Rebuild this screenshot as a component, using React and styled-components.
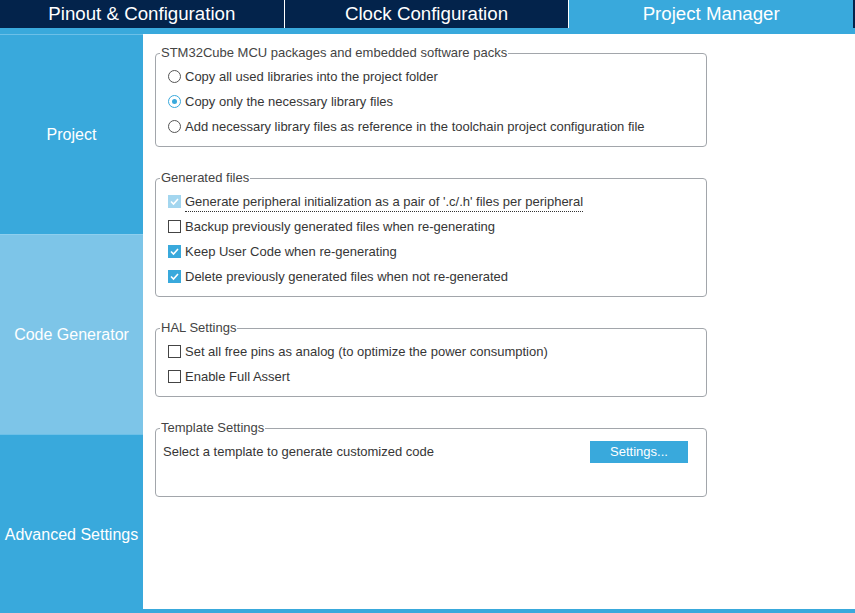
import React from 'react'
import styled, {createGlobalStyle} from 'styled-components'

const GlobalStyle = createGlobalStyle`
  html, body {
    margin: 0;
    padding: 0;
    overflow: hidden;
  }
  body {
    font-family: "Liberation Sans", Arial, sans-serif;
  }
`;

const BLUE = '#39a9dc';
const NAVY = '#03234b';

const Page = styled.div`
  width: 855px;
  height: 613px;
  background: ${BLUE};
  display: flex;
  flex-direction: column;
`;

const TabBar = styled.div`
  height: 28px;
  display: flex;
  background: ${NAVY};
  padding-right: 2px;
  margin-bottom: 6px;
`;

const Tab = styled.div`
  flex: 1;
  display: flex;
  align-items: center;
  justify-content: center;
  color: #fff;
  font-size: 18.7px;
  background: ${p => (p.$active ? BLUE : NAVY)};
  & + & {
    border-left: 1px solid #fff;
  }
`;

const Body = styled.div`
  flex: 1;
  display: flex;
  margin-bottom: 4px;
  min-height: 0;
`;

const Sidebar = styled.div`
  width: 143px;
  display: flex;
  flex-direction: column;
  overflow: hidden;
`;

const NavItem = styled.div`
  flex: 0 0 200px;
  box-sizing: border-box;
  display: flex;
  align-items: center;
  justify-content: center;
  border-top: 1px solid ${p => (p.$active ? '#8ecfee' : '#6cc0e8')};
  background: ${p => (p.$active ? '#7dc5e8' : BLUE)};
  color: #fff;
  font-size: 16px;
`;

const Content = styled.div`
  flex: 1;
  background: #fff;
  padding: 12px 0 0 12px;
`;

const Group = styled.fieldset`
  width: 552px;
  box-sizing: border-box;
  margin: 0 0 24px;
  padding: 4px 0 ${p => p.$pb || 7}px;
  border: 1px solid #a2a6ab;
  border-radius: 4px;
`;

const Legend = styled.legend`
  font-size: 13px;
  line-height: 14px;
  color: #444;
  padding: 0 1px;
  margin-left: 4px;
`;

const Row = styled.div`
  height: 25px;
  display: flex;
  align-items: center;
  gap: 4px;
  padding-left: 12px;
  font-size: 13px;
  color: #363636;
`;

const Label = styled.span`
  line-height: 15px;
  padding-bottom: 2px;
  margin-top: 3px;
  border-bottom: 1px ${p => (p.$focus ? 'dotted #333' : 'solid transparent')};
`;

const RadioBox = styled.span`
  width: 13px;
  height: 13px;
  box-sizing: border-box;
  border-radius: 50%;
  border: 1px solid ${p => (p.$on ? BLUE : '#555')};
  background: #fff;
  display: flex;
  align-items: center;
  justify-content: center;
  &::after {
    content: '';
    width: 5px;
    height: 5px;
    border-radius: 50%;
    background: ${p => (p.$on ? BLUE : 'transparent')};
  }
`;

const CheckBox = styled.span`
  width: 13px;
  height: 13px;
  box-sizing: border-box;
  border: 1px solid ${p => (p.$on ? (p.$dim ? '#a3d6ef' : BLUE) : '#444')};
  background: ${p => (p.$on ? (p.$dim ? '#a3d6ef' : BLUE) : '#fff')};
  display: flex;
  align-items: center;
  justify-content: center;
`;

const TemplateRow = styled.div`
  height: 25px;
  display: flex;
  align-items: center;
  justify-content: space-between;
  padding: 0 18px 0 7px;
  font-size: 13px;
  color: #363636;
`;

const Button = styled.button`
  width: 98px;
  height: 22px;
  border: none;
  background: ${BLUE};
  color: #fff;
  font-family: inherit;
  font-size: 13px;
  padding: 0;
`;

const Radio = ({on, children}) => (
  <Row>
    <RadioBox $on={on}/>
    <Label>{children}</Label>
  </Row>
);

const Check = ({on, dim, focus, children}) => (
  <Row>
    <CheckBox $on={on} $dim={dim}>
      {on && (
        <svg width="11" height="11" viewBox="0 0 11 11">
          <path d="M2 5.5 L4.5 8 L9 3" fill="none" stroke="#fff" strokeWidth="1.6"/>
        </svg>
      )}
    </CheckBox>
    <Label $focus={focus}>{children}</Label>
  </Row>
);

export default function App() {
  return (
    <Page>
      <GlobalStyle/>
      <TabBar>
        <Tab>Pinout &amp; Configuration</Tab>
        <Tab>Clock Configuration</Tab>
        <Tab $active>Project Manager</Tab>
      </TabBar>
      <Body>
        <Sidebar>
          <NavItem>Project</NavItem>
          <NavItem $active>Code Generator</NavItem>
          <NavItem>Advanced Settings</NavItem>
        </Sidebar>
        <Content>
          <Group>
            <Legend>STM32Cube MCU packages and embedded software packs</Legend>
            <Radio>Copy all used libraries into the project folder</Radio>
            <Radio on>Copy only the necessary library files</Radio>
            <Radio>Add necessary library files as reference in the toolchain project configuration file</Radio>
          </Group>
          <Group>
            <Legend>Generated files</Legend>
            <Check on dim focus>Generate peripheral initialization as a pair of '.c/.h' files per peripheral</Check>
            <Check>Backup previously generated files when re-generating</Check>
            <Check on>Keep User Code when re-generating</Check>
            <Check on>Delete previously generated files when not re-generated</Check>
          </Group>
          <Group>
            <Legend>HAL Settings</Legend>
            <Check>Set all free pins as analog (to optimize the power consumption)</Check>
            <Check>Enable Full Assert</Check>
          </Group>
          <Group $pb={32}>
            <Legend>Template Settings</Legend>
            <TemplateRow>
              <span>Select a template to generate customized code</span>
              <Button>Settings...</Button>
            </TemplateRow>
          </Group>
        </Content>
      </Body>
    </Page>
  )
}
